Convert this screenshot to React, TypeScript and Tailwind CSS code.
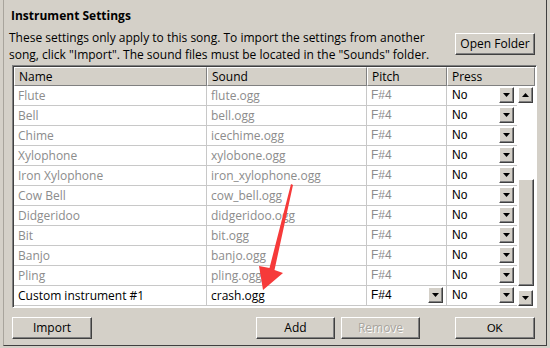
import React from "react";

const rows = [
  { name: "Flute", sound: "flute.ogg" },
  { name: "Bell", sound: "bell.ogg" },
  { name: "Chime", sound: "icechime.ogg" },
  { name: "Xylophone", sound: "xylobone.ogg" },
  { name: "Iron Xylophone", sound: "iron_xylophone.ogg" },
  { name: "Cow Bell", sound: "cow_bell.ogg" },
  { name: "Didgeridoo", sound: "didgeridoo.ogg" },
  { name: "Bit", sound: "bit.ogg" },
  { name: "Banjo", sound: "banjo.ogg" },
  { name: "Pling", sound: "pling.ogg" },
  { name: "Custom instrument #1", sound: "crash.ogg", custom: true },
];

const bevel =
  "bg-[#d4d0c8] border border-t-white border-l-white border-r-[#404040] border-b-[#404040] shadow-[inset_-1px_-1px_0_#808080]";

function Arrow({ up }: { up?: boolean }) {
  return (
    <svg width="7" height="4" viewBox="0 0 7 4" className="block">
      {up ? <path d="M0 4 L7 4 L3.5 0 Z" fill="#000" /> : <path d="M0 0 L7 0 L3.5 4 Z" fill="#000" />}
    </svg>
  );
}

function DropBtn({ up }: { up?: boolean }) {
  return (
    <div className={`${bevel} w-[15px] h-[16px] flex items-center justify-center shrink-0`}>
      <Arrow up={up} />
    </div>
  );
}

function Button({ children, className = "", disabled }: { children: React.ReactNode; className?: string; disabled?: boolean }) {
  return (
    <div
      className={`${bevel} h-[22px] flex items-center justify-center ${
        disabled ? "text-[#a8a59e] [text-shadow:1px_1px_0_#ffffff]" : "text-black"
      } ${className}`}
    >
      {children}
    </div>
  );
}

export default function App() {
  return (
    <div className="w-[550px] h-[348px] bg-[#d4d0c8] pl-[3px] pr-[3px] pb-[2px] relative font-['Open_Sans',sans-serif] overflow-hidden">
      <div className="h-full flex flex-col border-l border-r border-b border-l-[#a8a49c] border-r-[#404040] border-b-[#404040]">
        <div className="ml-[7px] mt-[7px] h-[17px] leading-[17px] text-[12px] font-bold text-black">Instrument Settings</div>

        <div className="flex mt-[5px]">
          <div className="ml-[5px] text-[12px] leading-[17px] text-black w-[440px]">
            These settings only apply to this song. To import the settings from another
            <br />
            song, click "Import". The sound files must be located in the "Sounds" folder.
          </div>
          <Button className="ml-[6px] mt-[4px] w-[80px] text-[12px]">Open Folder</Button>
        </div>

        <div className="ml-[8px] mt-[2px] w-[525px] h-[243px] border border-t-[#808080] border-l-[#808080] border-r-white border-b-white shadow-[inset_1px_1px_0_#404040] p-[1px] bg-white">
          <div className="flex h-[19px] text-[12px] text-black">
            <div className="w-[193px] border border-t-white border-l-white border-r-[#808080] border-b-[#808080] bg-[#d4d0c8] pl-[4px] leading-[17px]">Name</div>
            <div className="w-[160px] border border-t-white border-l-white border-r-[#808080] border-b-[#808080] bg-[#d4d0c8] pl-[4px] leading-[17px]">Sound</div>
            <div className="w-[80px] border border-t-white border-l-white border-r-[#808080] border-b-[#808080] bg-[#d4d0c8] pl-[4px] leading-[17px]">Pitch</div>
            <div className="w-[88px] border border-t-white border-l-white border-r-[#808080] border-b-[#808080] bg-[#d4d0c8] pl-[4px] leading-[17px]">Press</div>
          </div>
          <div className="flex">
            <div className="w-[503px]">
              {rows.map((r) => (
                <div key={r.name} className="flex h-[20px] border-b border-[#c8c8c8]">
                  <div className={`w-[193px] border-r border-[#c8c8c8] pl-[4px] text-[12px] leading-[19px] ${r.custom ? "text-black" : "text-[#8c8c8c]"}`}>
                    {r.name}
                  </div>
                  <div className={`w-[160px] border-r border-[#c8c8c8] pl-[4px] text-[12px] leading-[19px] ${r.custom ? "text-black" : "text-[#8c8c8c]"}`}>
                    {r.sound}
                  </div>
                  <div className={`w-[80px] border-r border-[#c8c8c8] pl-[4px] pr-[3px] flex justify-between items-start font-['Liberation_Sans',sans-serif] text-[12px] leading-[19px] ${r.custom ? "text-black" : "text-[#8c8c8c]"}`}>
                    <span>F#4</span>
                    {r.custom && (
                      <div className="mt-[1px]">
                        <DropBtn />
                      </div>
                    )}
                  </div>
                  <div className="w-[70px] pl-[5px] pr-[3px] flex justify-between items-start font-['Liberation_Sans',sans-serif] text-[12px] leading-[19px] text-black">
                    <span>No</span>
                    <div className="mt-[1px]">
                      <DropBtn />
                    </div>
                  </div>
                </div>
              ))}
            </div>
            <div className="w-[18px] h-[220px] pl-[1px] flex flex-col bg-white">
              <div className="mt-[1px]">
                <DropBtn up />
              </div>
              <div className="h-[76px]" />
              <div className={`${bevel} w-[16px] h-[108px]`} />
              <div className="h-[4px]" />
              <DropBtn />
            </div>
          </div>
        </div>

        <div className="flex mt-[9px] ml-[8px] text-[12px]">
          <Button className="w-[80px]">Import</Button>
          <Button className="ml-[164px] w-[79px]">Add</Button>
          <Button className="ml-[6px] w-[79px]" disabled>
            Remove
          </Button>
          <Button className="ml-[35px] w-[80px] font-['Liberation_Sans',sans-serif] text-[11px]">OK</Button>
        </div>
      </div>

      <svg className="absolute left-0 top-0 pointer-events-none" width="550" height="348" viewBox="0 0 550 348">
        <polygon points="291,184 293,185 274.5,270 283,273 263,290 259,266 269.5,268" fill="#f63a3a" />
      </svg>
    </div>
  );
}
